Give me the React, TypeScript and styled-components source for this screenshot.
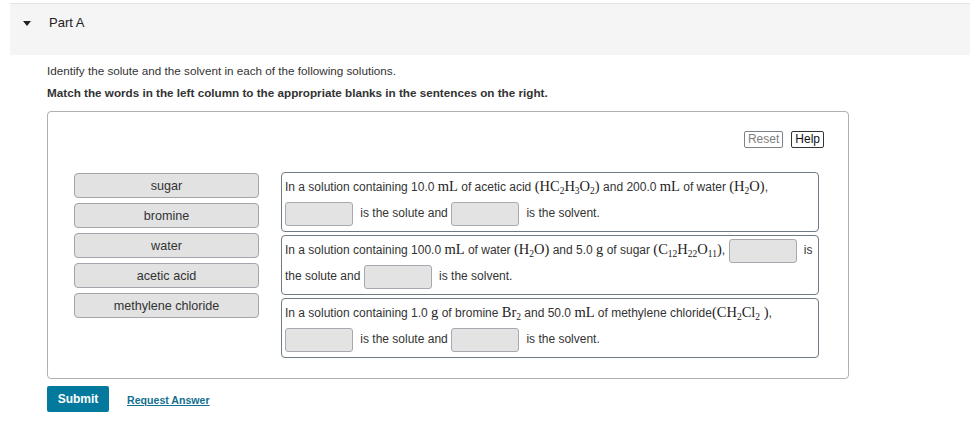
import styled, { createGlobalStyle } from "styled-components";

const GlobalStyle = createGlobalStyle`
  body {
    margin: 0;
    background: #ffffff;
    font-family: "Liberation Sans", Arial, sans-serif;
    color: #333333;
  }
`;

const Page = styled.div`
  width: 970px;
  padding-top: 3px;
`;

const Header = styled.div`
  margin-left: 10px;
  height: 52px;
  background: #f5f5f5;
  border-top: 1px solid #e2e2e2;
  display: flex;
  align-items: flex-start;
  padding: 11px 0 0 13px;
  box-sizing: border-box;
  gap: 18px;
`;

const Caret = styled.span`
  margin-top: 6px;
  width: 0;
  height: 0;
  border-left: 4px solid transparent;
  border-right: 4px solid transparent;
  border-top: 5px solid #222;
`;

const PartTitle = styled.div`
  font-size: 13px;
  color: #222;
  line-height: 16px;
`;

const Body = styled.div`
  padding: 9px 0 0 47px;
`;

const Intro = styled.p<{ $bold?: boolean }>`
  margin: 0 0 8px;
  font-size: 11.7px;
  line-height: 14px;
  font-weight: ${(p) => (p.$bold ? "bold" : "normal")};
`;

const Panel = styled.div`
  margin-top: 11px;
  width: 802px;
  height: 268px;
  box-sizing: border-box;
  border: 1px solid #b0b0b0;
  border-radius: 4px;
  padding: 19px 24px 0 26px;
`;

const Tools = styled.div`
  display: flex;
  justify-content: flex-end;
  gap: 8px;
`;

const ToolButton = styled.button<{ $muted?: boolean }>`
  font-family: "Liberation Sans", Arial, sans-serif;
  font-size: 12px;
  line-height: 13px;
  padding: 1px 3px;
  background: #fff;
  color: ${(p) => (p.$muted ? "#808080" : "#111")};
  border: 1px solid ${(p) => (p.$muted ? "#7a8288" : "#333")};
  border-radius: 2px;
`;

const Columns = styled.div`
  margin-top: 24px;
  display: flex;
  gap: 22px;
`;

const WordList = styled.div`
  width: 185px;
  padding-top: 1px;
  display: flex;
  flex-direction: column;
  gap: 5px;
`;

const Word = styled.div`
  height: 25px;
  box-sizing: border-box;
  background: #e2e2e2;
  border: 1px solid #a4a4ac;
  border-radius: 4px;
  font-size: 12.6px;
  display: flex;
  align-items: center;
  justify-content: center;
  color: #333;
`;

const Sentences = styled.div`
  width: 538px;
  display: flex;
  flex-direction: column;
  gap: 3px;
`;

const Sentence = styled.div`
  border: 1px solid #6f7b84;
  border-radius: 4px;
  padding: 0 3px 5px 3px;
  font-size: 12px;
  line-height: 26px;
  color: #333;
  white-space: nowrap;
`;

const Blank = styled.span`
  display: inline-block;
  width: 68px;
  height: 24px;
  box-sizing: border-box;
  vertical-align: middle;
  background: #e3e3e3;
  border: 1px solid #a8a8b0;
  border-radius: 3px;
  margin: 0 4px 0 0;
`;

const M = styled.span`
  font-family: "Liberation Serif", "Times New Roman", serif;
  font-size: 14.5px;
  color: #222;
  sub {
    font-size: 9.5px;
    line-height: 0;
    vertical-align: -3px;
  }
`;

const Actions = styled.div`
  margin-top: 7px;
  display: flex;
  align-items: center;
  gap: 18px;
`;

const Submit = styled.button`
  width: 62px;
  height: 26px;
  background: #037a9d;
  color: #fff;
  border: none;
  border-radius: 2px;
  font-family: "Liberation Sans", Arial, sans-serif;
  font-size: 12px;
  font-weight: bold;
`;

const RequestLink = styled.a`
  font-size: 10.6px;
  font-weight: bold;
  color: #12708f;
  text-decoration: underline;
  margin-top: 2px;
`;

function App() {
  return (
    <Page>
      <GlobalStyle />
      <Header>
        <Caret />
        <PartTitle>Part A</PartTitle>
      </Header>
      <Body>
        <Intro>Identify the solute and the solvent in each of the following solutions.</Intro>
        <Intro $bold>
          Match the words in the left column to the appropriate blanks in the sentences on the right.
        </Intro>
        <Panel>
          <Tools>
            <ToolButton $muted>Reset</ToolButton>
            <ToolButton>Help</ToolButton>
          </Tools>
          <Columns>
            <WordList>
              <Word>sugar</Word>
              <Word>bromine</Word>
              <Word>water</Word>
              <Word>acetic acid</Word>
              <Word>methylene chloride</Word>
            </WordList>
            <Sentences>
              <Sentence>
                In a solution containing 10.0 <M>mL</M> of acetic acid{" "}
                <M>
                  (HC<sub>2</sub>H<sub>3</sub>O<sub>2</sub>)
                </M>{" "}
                and 200.0 <M>mL</M> of water{" "}
                <M>
                  (H<sub>2</sub>O)
                </M>
                ,
                <br />
                <Blank /> is the solute and <Blank /> is the solvent.
              </Sentence>
              <Sentence>
                In a solution containing 100.0 <M>mL</M> of water{" "}
                <M>
                  (H<sub>2</sub>O)
                </M>{" "}
                and 5.0 <M>g</M> of sugar{" "}
                <M>
                  (C<sub>12</sub>H<sub>22</sub>O<sub>11</sub>)
                </M>
                , <Blank /> is
                <br />
                the solute and <Blank /> is the solvent.
              </Sentence>
              <Sentence>
                In a solution containing 1.0 <M>g</M> of bromine{" "}
                <M>
                  Br<sub>2</sub>
                </M>{" "}
                and 50.0 <M>mL</M> of methylene chloride
                <M>
                  (CH<sub>2</sub>Cl<sub>2</sub> )
                </M>
                ,
                <br />
                <Blank /> is the solute and <Blank /> is the solvent.
              </Sentence>
            </Sentences>
          </Columns>
        </Panel>
        <Actions>
          <Submit>Submit</Submit>
          <RequestLink href="#">Request Answer</RequestLink>
        </Actions>
      </Body>
    </Page>
  );
}

export default App;
